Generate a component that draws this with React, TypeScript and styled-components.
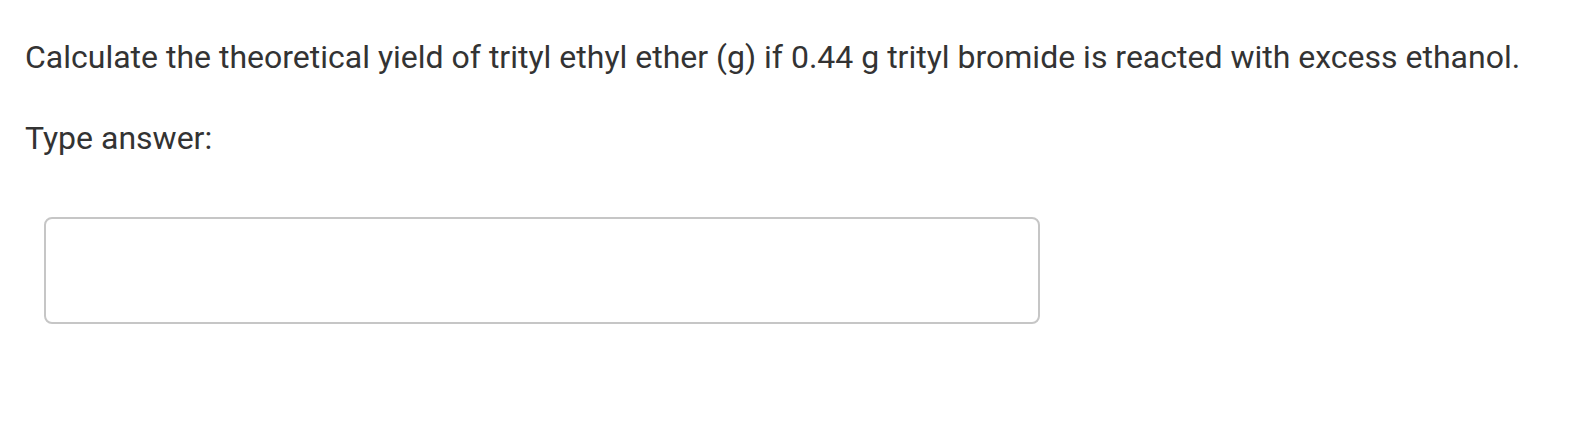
import styled, { createGlobalStyle } from 'styled-components';

const GlobalStyle = createGlobalStyle`
  body {
    margin: 0;
    background: #ffffff;
    font-family: Roboto, "Liberation Sans", sans-serif;
    color: #333333;
  }
`;

const Question = styled.section`
  padding: 33px 25px 0;
`;

const Prompt = styled.p`
  margin: 0;
  font-size: 32px;
  line-height: 48px;
`;

const Label = styled.p`
  margin: 33px 0 0;
  font-size: 32px;
  line-height: 48px;
`;

const AnswerInput = styled.input`
  display: block;
  box-sizing: border-box;
  width: 996px;
  height: 107px;
  margin: 55px 0 0 19px;
  border: 2px solid #c6c6c6;
  border-radius: 8px;
  background: #ffffff;
  font: inherit;
  font-size: 32px;
  padding: 0 20px;
  outline: none;
`;

const App = () => {
  return (
    <>
      <GlobalStyle />
      <Question>
        <Prompt>
          Calculate the theoretical yield of trityl ethyl ether (g) if 0.44 g
          trityl bromide is reacted with excess ethanol.
        </Prompt>
        <Label>Type answer:</Label>
        <AnswerInput type="text" aria-label="Type answer" />
      </Question>
    </>
  );
};

export default App;
